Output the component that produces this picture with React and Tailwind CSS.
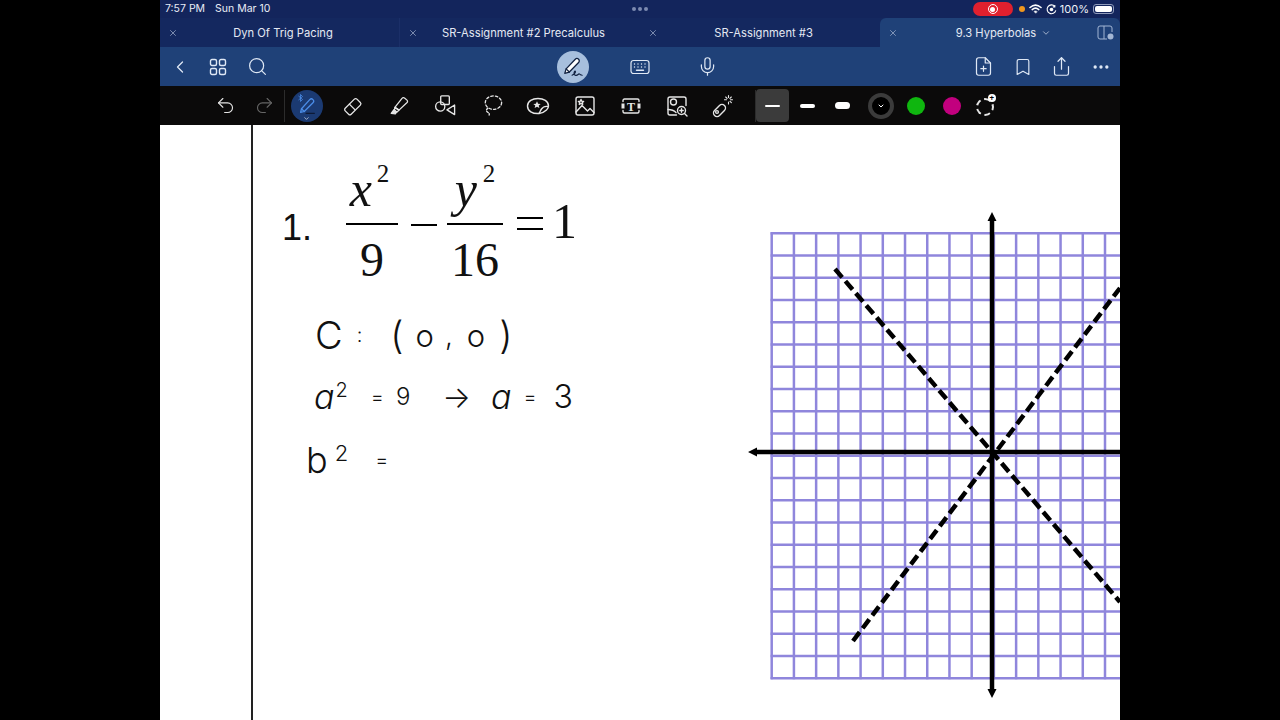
import { ChevronLeft, ChevronDown, X, Search, Mic, Bookmark, Share, Ellipsis, Undo2, Redo2 } from "lucide-react";

const tabs = ["Dyn Of Trig Pacing", "SR-Assignment #2 Precalculus", "SR-Assignment #3", "9.3 Hyperbolas"];
const ink = "text-[#dfe8f5]";

function Icon({ size = 24, children, className = "" }) {
  return (
    <svg width={size} height={size} viewBox="0 0 24 24" fill="none" stroke="currentColor" strokeWidth="1.4" strokeLinecap="round" strokeLinejoin="round" className={className}>
      {children}
    </svg>
  );
}

function StatusBar() {
  return (
    <div className="h-[18px] flex items-center bg-[#13255c] text-[10.5px] text-[#e8ecf5] pl-[5px] pr-[6px] font-['Inter',sans-serif]">
      <div className="flex-1 flex items-center">
        <span>7:57 PM</span>
        <span className="ml-[10px]">Sun Mar 10</span>
      </div>
      <div className="flex justify-center gap-[2px]">
        <i className="w-[4px] h-[4px] rounded-full bg-[#7d8bb0]" />
        <i className="w-[4px] h-[4px] rounded-full bg-[#7d8bb0]" />
        <i className="w-[4px] h-[4px] rounded-full bg-[#7d8bb0]" />
      </div>
      <div className="flex-1 flex items-center justify-end">
        <div className="w-[40px] h-[14px] rounded-full bg-[#e0202e] flex items-center justify-center">
          <span className="w-[10px] h-[10px] rounded-full border border-white flex items-center justify-center">
            <i className="w-[5px] h-[5px] rounded-full bg-white" />
          </span>
        </div>
        <i className="w-[6px] h-[6px] rounded-full bg-[#f0961e] ml-[6px]" />
        <svg width="13" height="10" viewBox="0 0 13 10" className="ml-[4px]" fill="none" stroke="white" strokeLinecap="round">
          <path d="M1 3.500C4.500.4 8.500.4 12 3.500" strokeWidth="1.600" />
          <path d="M3.200 5.600c2-1.700 4.600-1.700 6.600 0" strokeWidth="1.600" />
          <path d="M6.500 9 5 7.500c.9-.7 2.100-.7 3 0Z" fill="white" strokeWidth="0.600" />
        </svg>
        <svg width="11" height="11" viewBox="0 0 11 11" className="ml-[4px]" fill="none" stroke="white" strokeWidth="1.100">
          <path d="M9.800 6.400A4.400 4.400 0 1 1 8.800 2.300" />
          <circle cx="5.500" cy="5.500" r="1.800" fill="white" stroke="none" />
          <path d="M8.800.9v2h-2" />
        </svg>
        <span className="ml-[3px] text-[#eef1f7] text-[11px]">100%</span>
        <div className="ml-[4px] w-[21px] h-[10px] rounded-[3px] border border-[#8f9bbb] p-[1px]">
          <div className="w-full h-full rounded-[2px] bg-white" />
        </div>
      </div>
    </div>
  );
}

function TabBar() {
  return (
    <div className="h-[29px] flex bg-[#14285f] text-[11.2px] text-[#e4e9f3] font-['Inter',sans-serif]">
      {tabs.map((t, i) => {
        const active = i === 3;
        return (
          <div key={t} className={"w-[240px] relative flex items-center justify-center pl-[7px] pt-px " + (active ? "bg-[#1f4178] rounded-t-[6px]" : i === 0 ? "border-r border-[#1b2f68]" : "")}>
            <X size={10} strokeWidth={1.500} className="absolute left-[8px] top-[10px] text-[#b9c4dc]" />
            <span>{t}</span>
            {active && <ChevronDown size={10} strokeWidth={1.600} className="ml-[5px]" />}
            {active && (
              <svg width="17" height="15" viewBox="0 0 17 15" fill="none" className="absolute right-[6px] top-[7px]" stroke="#a3b6d4" strokeWidth="1">
                <path d="M15 7V3a2 2 0 0 0-2-2H3a2 2 0 0 0-2 2v9a2 2 0 0 0 2 2h7M7 1v13" />
                <circle cx="13.500" cy="11.500" r="3" fill="#a3b6d4" stroke="none" />
              </svg>
            )}
          </div>
        );
      })}
    </div>
  );
}

function NavBar() {
  const cell = "w-[39px] flex justify-center";
  const mid = "w-[67px] flex justify-center";
  return (
    <div className={"h-[39px] flex items-center bg-[#1f4178] " + ink}>
      <div className="w-[379.500px] shrink-0 flex items-center pl-[10px]">
        <ChevronLeft size={20} strokeWidth={1.500} />
        <svg width="18" height="18" viewBox="0 0 18 18" fill="none" stroke="currentColor" strokeWidth="1.400" className="ml-[19px]">
          <rect x="1.500" y="1.500" width="6" height="6" rx="1.500" />
          <rect x="10.500" y="1.500" width="6" height="6" rx="1.500" />
          <rect x="1.500" y="10.500" width="6" height="6" rx="1.500" />
          <rect x="10.500" y="10.500" width="6" height="6" rx="1.500" />
        </svg>
        <Search size={21} strokeWidth={1.400} className="ml-[20px]" />
      </div>
      <div className="flex items-center">
        <div className={mid}>
          <div className="w-[32px] h-[32px] rounded-full bg-[#a7bfdd] flex items-center justify-center text-[#10203f]">
            <Icon size={22}>
              <path d="M3 19l1.500-5L14.500 3.500c1-1 2.600-1 3.600 0s1 2.600 0 3.600L8 17.500 3 19Z" fill="white" />
              <path d="M4.500 14l3.500 3.500" />
              <path d="M11 21c2.500-1 4.500-3.500 3.500-4.500s-2.500 3.500 0 4.500 4-2.500 4.500-1.500.5 1.500 3 1.500" strokeWidth="1.200" />
            </Icon>
          </div>
        </div>
        <div className={mid}>
          <svg width="20" height="16" viewBox="0 0 20 16" fill="none" stroke="currentColor" strokeWidth="1.200">
            <rect x="1" y="1.500" width="18" height="13" rx="2.500" />
            <path d="M4.500 5h.01M8 5h.01M11.500 5h.01M15 5h.01M4.500 8h.01M8 8h.01M11.500 8h.01M15 8h.01M6.500 11.300h7" strokeWidth="1.400" strokeLinecap="round" />
          </svg>
        </div>
        <div className={mid}>
          <Mic size={21} strokeWidth={1.400} />
        </div>
      </div>
      <div className="flex-1 flex items-center justify-end">
        <div className={cell}>
          <Icon size={21}>
            <path d="M14 2H6.500A2.500 2.500 0 0 0 4 4.500v15A2.500 2.500 0 0 0 6.500 22h11a2.500 2.500 0 0 0 2.500-2.500V8Z" />
            <path d="M14 2v6h6M12 11.500v6M9 14.500h6" />
          </Icon>
        </div>
        <div className={cell}><Bookmark size={20} strokeWidth={1.400} /></div>
        <div className={cell}><Share size={21} strokeWidth={1.400} /></div>
        <div className={cell}><Ellipsis size={20} strokeWidth={2} /></div>
      </div>
    </div>
  );
}

function ToolBar() {
  const cell = "w-[46.300px] flex justify-center";
  return (
    <div className="h-[39px] flex items-center bg-[#0b0a0a] text-[#e6e6e6] pl-[45px]">
      <div className="w-[40px] flex justify-center"><Undo2 size={21} strokeWidth={1.300} /></div>
      <div className="w-[39px] flex justify-center"><Redo2 size={21} strokeWidth={1.300} className="text-[#666]" /></div>
      <div className="w-px h-[32px] bg-[#2c2c2c]" />
      <div className="ml-[6px] w-[32px] h-[32px] rounded-full bg-[#1b3a72] relative flex items-center justify-center text-[#4b8de8]">
        <Icon size={22}>
          <path d="M5 19l1-4L15 5c1-1 2.500-1 3.500 0s1 2.500 0 3.500L9 18l-4 1Z" />
          <path d="M6 15l3 3" />
          <path d="M11 20h9" stroke="#0d1a36" />
        </Icon>
        <svg width="5" height="8" viewBox="0 0 5 8" fill="none" stroke="#4b8de8" strokeWidth="0.800" className="absolute left-[7px] top-[4px]">
          <path d="M.5 2l4 3.500L2.500 7.500V.5l2 2L.5 6" />
        </svg>
        <ChevronDown size={7} className="absolute bottom-0 left-[12px] text-white" />
      </div>
      <div className="flex items-center ml-[7px]">
        <div className={cell}>
          <Icon size={22}>
            <path d="M3.500 14.500 13.500 4.500c.8-.8 2-.8 2.800 0l3.700 3.700c.8.8.8 2 0 2.800L10 21c-.8.800-2 .8-2.800 0l-3.700-3.700c-.8-.8-.8-2 0-2.800Z" />
            <path d="m8 10 6 6" />
          </Icon>
        </div>
        <div className={cell}>
          <Icon size={22}>
            <path d="M7.500 13.500 15.500 3.500c.6-.8 1.800-.9 2.500-.2l2.700 2.300c.8.700.8 1.900.1 2.600L12 16.500Z" />
            <path d="M7.500 13.500l4.500 3-2 2-3-1.500Z" />
            <path d="M6.500 16l3 2.500-1.500 2-4.500-.5Z" fill="currentColor" />
          </Icon>
        </div>
        <div className={cell}>
          <Icon size={23}>
            <rect x="7" y="2" width="9" height="9" rx="1" />
            <circle cx="6.500" cy="13" r="4.800" />
            <path d="M21.500 11.500v10l-8-5Z" />
          </Icon>
        </div>
        <div className={cell}>
          <Icon size={23}>
            <ellipse cx="13" cy="9" rx="8.500" ry="7" strokeDasharray="2.500 2.300" />
            <path d="M7 15c-2 1.500-1.500 3 0 4s2 1.500 1.500 3" strokeDasharray="1.800 1.800" />
          </Icon>
        </div>
        <div className={cell}>
          <Icon size={24}>
            <path d="M13 19.500c-6.500.5-11.500-2.500-11.500-7.500s5-7.500 10.500-7.500 10.500 2.500 10.500 7.500c0 1.500-.6 2.800-2 4-1.500 1.500-3.500 2.800-7.500 3.500Z" />
            <path d="M22 12.500c-3.500-.5-5.500 1-6.500 2.500s-1.500 2.800-2.500 4.500" />
            <path d="m11 7.300 1.100 2.500 2.600.2-2 1.600.7 2.500-2.400-1.400-2.400 1.400.7-2.500-2-1.600 2.600-.2Z" fill="currentColor" stroke="none" />
          </Icon>
        </div>
        <div className={cell}>
          <Icon size={24}>
            <rect x="3" y="3" width="18" height="18" rx="2" />
            <path d="M3 18l6-6.500 5.500 5.500 2.500-2.500 4 4" />
            <path d="m8 5.500.8 1.700 1.800.2-1.300 1.200.4 1.800L8 9.500l-1.700.9.400-1.800L5.400 7.400l1.800-.2Z" />
          </Icon>
        </div>
        <div className={cell}>
          <Icon size={24}>
            <path d="M4 7.500V6.500A1.500 1.500 0 0 1 5.500 5h13A1.500 1.500 0 0 1 20 6.500v1M4 16.500v1A1.500 1.500 0 0 0 5.500 19h13a1.500 1.500 0 0 0 1.500-1.500v-1" />
            <path d="M2.500 9.500h3v5h-3ZM18.500 9.500h3v5h-3Z" fill="currentColor" stroke="none" />
            <text x="12" y="16.500" textAnchor="middle" fontSize="12" fontWeight="700" fill="currentColor" stroke="none" fontFamily="'Liberation Serif', serif">T</text>
          </Icon>
        </div>
        <div className={cell}>
          <Icon size={24}>
            <path d="M11.500 21H5a2 2 0 0 1-2-2V5a2 2 0 0 1 2-2h14a2 2 0 0 1 2 2v6.500" />
            <circle cx="8.500" cy="8" r="3" />
            <circle cx="16.500" cy="16.500" r="4" />
            <path d="m19.500 19.500 2.500 2.500M14.800 16.500h3.400M16.500 14.800v3.400M3 15.500c3 0 5 0 8 3" />
          </Icon>
        </div>
        <div className={cell}>
          <Icon size={24} className="-ml-[3px]">
            <rect x="2.500" y="13" width="14" height="7" rx="3.500" transform="rotate(-45 9.500 16.500)" />
            <circle cx="7" cy="18" r="1.400" />
            <path d="M18.500 1.500v2M18.500 8v2M14.500 5.800h2M20.500 5.800h2M15.700 3l1.400 1.400M20 7.300l1.400 1.400M21.300 3l-1.400 1.400" strokeWidth="1.100" />
          </Icon>
        </div>
      </div>
      <div className="w-px h-[32px] bg-[#2c2c2c] ml-[8px]" />
      <div className="w-[33px] h-[33px] rounded-[4px] bg-[#3b3b3b] flex items-center justify-center">
        <i className="w-[15px] h-[2px] bg-white rounded-full" />
      </div>
      <i className="w-[15px] h-[4px] bg-white rounded-full ml-[11.500px]" />
      <i className="w-[15px] h-[7px] bg-white rounded-full ml-[20px]" />
      <div className="w-[26px] h-[26px] rounded-full border-[4px] border-[#3b3b3b] bg-black flex items-center justify-center ml-[17.500px]">
        <ChevronDown size={8} strokeWidth={3} className="text-white" />
      </div>
      <i className="w-[18px] h-[18px] rounded-full bg-[#0fb60f] ml-[13px]" />
      <i className="w-[18px] h-[18px] rounded-full bg-[#c2007e] ml-[18px]" />
      <div className="relative ml-[15px] w-[18px] h-[18px] rounded-full border-2 border-dashed border-[#e6e6e6] mt-[3px]">
        <span className="absolute -top-[6px] -right-[4px] w-[8px] h-[8px] rounded-full bg-white text-black text-[8px] leading-[8px] text-center font-bold">+</span>
      </div>
    </div>
  );
}

function Frac({ top, bottom, width, gap, shift }) {
  return (
    <div className="flex flex-col items-center" style={{ width }}>
      <div className="h-[64px] flex items-start pt-[2px]" style={{ paddingRight: shift }}>
        <span className="italic text-[50px] leading-[56px]">{top}</span>
        <span className="text-[25px] leading-[28px] -mt-[1px]" style={{ marginLeft: gap }}>2</span>
      </div>
      <div className="h-[2px] w-full bg-black" />
      <div className="text-[48px] leading-[50px] mt-[10px]">{bottom}</div>
    </div>
  );
}

function Equation() {
  return (
    <div className="flex items-start text-[#111] font-['Liberation_Serif',serif] pt-[34px]">
      <span className="font-['Liberation_Sans',sans-serif] text-[36px] leading-[40px] mt-[49px] ml-[29px] w-[64px]">1.</span>
      <Frac top="x" bottom="9" width="52px" gap="5px" shift="5px" />
      <span className="w-[26px] h-[2px] bg-black ml-[13px] mt-[65px]" />
      <span className="ml-[10px]" />
      <Frac top="y" bottom="16" width="56px" gap="6px" shift="0" />
      <div className="ml-[14px] mt-[58px] flex flex-col gap-[9px] w-[26px]">
        <i className="h-[2px] bg-black" />
        <i className="h-[2px] bg-black" />
      </div>
      <span className="text-[50px] leading-[56px] ml-[9px] mt-[34px]">1</span>
    </div>
  );
}

function Handwriting() {
  return (
    <div className="font-['Inter',sans-serif] font-light text-[#111] mt-[28px]">
      <div className="flex items-center h-[44px] ml-[62px] text-[38px] leading-none">
        <span>C</span>
        <span className="text-[20px] ml-[14px]">:</span>
        <span className="ml-[28px]">(</span>
        <span className="text-[31px] ml-[12px]">o</span>
        <span className="text-[28px] ml-[11px]">,</span>
        <span className="text-[31px] ml-[14px]">o</span>
        <span className="ml-[14px]">)</span>
      </div>
      <div className="flex items-center h-[44px] ml-[61px] mt-[18px] text-[34px] leading-none">
        <span className="italic">a</span>
        <span className="text-[20px] -mt-[14px] ml-[1px]">2</span>
        <span className="text-[20px] ml-[23px]">=</span>
        <span className="text-[24px] ml-[12px]">9</span>
        <span className="text-[30px] ml-[32px]">→</span>
        <span className="italic ml-[20px]">a</span>
        <span className="text-[20px] ml-[12px]">=</span>
        <span className="ml-[17px] text-[32px]">3</span>
      </div>
      <div className="flex items-center h-[44px] ml-[53px] mt-[19px] text-[36px] leading-none">
        <span>b</span>
        <span className="text-[22px] -mt-[14px] ml-[7px]">2</span>
        <span className="text-[20px] ml-[27px]">=</span>
      </div>
    </div>
  );
}

function Graph() {
  const vs = Array.from({ length: 16 }, (_, i) => 771.7 + i * 22.22);
  const hs = Array.from({ length: 21 }, (_, i) => 233.3 + i * 22.25);
  return (
    <svg width="375" height="494" viewBox="745 208 375 494" className="shrink-0 mt-[83px]">
      {vs.map((x) => <line key={x} x1={x} x2={x} y1="232.300" y2="679.300" stroke="#8f86dc" strokeWidth="2.500" />)}
      {hs.map((y) => <line key={y} x1="770.600" x2="1120" y1={y} y2={y} stroke="#8f86dc" strokeWidth="2.500" />)}
      <path d="M835 269 992 452 1120 602M853 641 992 457 1120 288" fill="none" stroke="#000" strokeWidth="4.500" strokeDasharray="11 5" />
      <path d="M992 218V692M755 452H1120" stroke="#000" strokeWidth="4.500" fill="none" />
      <path d="M992 212l-4.500 9h9ZM992 698l-4.500-9h9ZM748 452l9-4.500v9Z" fill="#000" />
    </svg>
  );
}

export default function App() {
  return (
    <div className="w-[1280px] h-[720px] bg-black flex justify-center overflow-hidden">
      <div className="w-[960px] h-[720px] flex flex-col">
        <StatusBar />
        <TabBar />
        <NavBar />
        <ToolBar />
        <div className="flex-1 bg-white flex min-h-0 overflow-hidden">
          <div className="w-[93px] shrink-0 border-r-2 border-[#222]" />
          <div className="flex-1 min-w-0">
            <Equation />
            <Handwriting />
          </div>
          <Graph />
        </div>
      </div>
    </div>
  );
}
